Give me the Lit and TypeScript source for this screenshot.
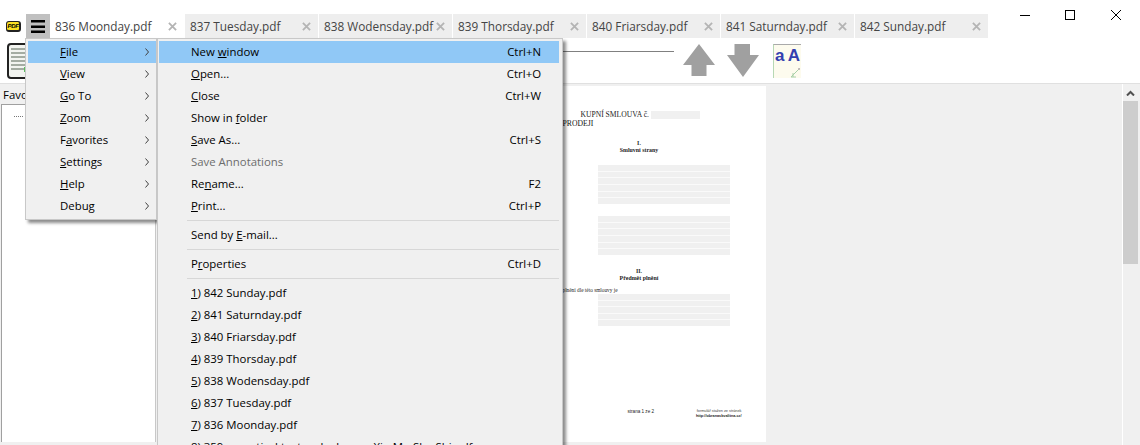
import { LitElement, html, css, nothing } from 'lit';
import { customElement } from 'lit/decorators.js';

type MenuRow = { label?: string; key?: string; disabled?: boolean; active?: boolean; sep?: boolean };

const TABS = [
  '836 Moonday.pdf',
  '837 Tuesday.pdf',
  '838 Wodensday.pdf',
  '839 Thorsday.pdf',
  '840 Friarsday.pdf',
  '841 Saturnday.pdf',
  '842 Sunday.pdf',
];

const MAIN_MENU = ['&File', '&View', '&Go To', '&Zoom', 'F&avorites', '&Settings', '&Help', 'Debug'];

const FILE_MENU: MenuRow[] = [
  { label: 'New &window', key: 'Ctrl+N', active: true },
  { label: '&Open...', key: 'Ctrl+O' },
  { label: '&Close', key: 'Ctrl+W' },
  { label: 'Show in &folder' },
  { label: '&Save As...', key: 'Ctrl+S' },
  { label: 'Save Annotations', disabled: true },
  { label: 'Re&name...', key: 'F2' },
  { label: '&Print...', key: 'Ctrl+P' },
  { sep: true },
  { label: 'Send by &E-mail...' },
  { sep: true },
  { label: 'P&roperties', key: 'Ctrl+D' },
  { sep: true },
  { label: '&1) 842 Sunday.pdf' },
  { label: '&2) 841 Saturnday.pdf' },
  { label: '&3) 840 Friarsday.pdf' },
  { label: '&4) 839 Thorsday.pdf' },
  { label: '&5) 838 Wodensday.pdf' },
  { label: '&6) 837 Tuesday.pdf' },
  { label: '&7) 836 Moonday.pdf' },
  { label: '&8) 359 - practical text a ok okrem - Xin Mu Sha Shi.pdf' },
];

// "&" marks the accelerator letter, as in a Windows menu resource
function accel(label: string) {
  const i = label.indexOf('&');
  if (i < 0) return label;
  return html`${label.slice(0, i)}<u>${label[i + 1]}</u>${label.slice(i + 2)}`;
}

@customElement('app-root')
export class AppRoot extends LitElement {
  static styles = css`
    :host {
      display: block;
      position: relative;
      width: 1140px;
      height: 445px;
      overflow: hidden;
      background: #fff;
      font-family: 'Open Sans', 'Noto Sans', sans-serif;
      font-size: 11.4px;
      color: #000;
    }

    /* title bar with tabs */
    .titlebar {
      display: flex;
      height: 38px;
      padding-right: 1px;
      box-sizing: border-box;
    }

    .tabs {
      display: flex;
      align-items: center;
      gap: 1px;
      height: 24px;
      margin-top: 14px;
      padding-left: 6px;
    }

    .logo {
      display: flex;
      align-items: center;
      justify-content: center;
      width: 15px;
      height: 11px;
      margin-right: 4px;
      background: #fbe122;
      border: 1px solid #222;
      border-width: 1px 2px 2px 1px;
      box-sizing: border-box;
      border-radius: 3px;
      font-family: 'Liberation Sans', sans-serif;
      font-size: 6px;
      font-weight: 700;
      font-style: italic;
      letter-spacing: -0.3px;
    }

    .burger {
      display: flex;
      align-items: center;
      justify-content: center;
      width: 24px;
      height: 24px;
      margin-right: -1px;
      background: #c0c0c0;
    }

    .tab {
      display: flex;
      align-items: center;
      justify-content: space-between;
      width: 133px;
      height: 24px;
      padding: 0 7px 0 5px;
      box-sizing: border-box;
      background: #eee;
      color: #444;
      font-size: 11.8px;
      white-space: nowrap;
    }

    .tab.active {
      width: 134px;
      background: #fff;
    }

    .controls {
      display: flex;
      margin-left: auto;
    }

    .win-btn {
      display: flex;
      align-items: center;
      justify-content: center;
      width: 46px;
      height: 30px;
      box-sizing: border-box;
    }

    .win-btn.first {
      padding-left: 2px;
    }

    /* toolbar */
    .toolbar {
      display: flex;
      align-items: flex-start;
      height: 46px;
      padding: 5px 0 0 7px;
      box-sizing: border-box;
      border-bottom: 1px solid #e0e0e0;
    }

    .thumb {
      position: relative;
      width: 45px;
      height: 36px;
      box-sizing: border-box;
      border: 2px solid #222;
      border-radius: 4px;
      background: #f2f4f0;
      padding: 3px 2px;
    }

    .thumb-line {
      height: 2px;
      margin-bottom: 2px;
      background: #a4aca2;
    }

    .thumb-dot {
      position: absolute;
      left: 15px;
      top: 22px;
      width: 2px;
      height: 5px;
      background: #5cc060;
    }

    .slider {
      width: 622px;
      height: 1px;
      margin-top: 8px;
      background: #808080;
    }

    .arrow {
      display: block;
      flex: none;
    }

    .arrow.up {
      margin-left: 9px;
    }

    .arrow.down {
      margin-left: 12px;
    }

    .font-btn {
      display: flex;
      justify-content: space-between;
      position: relative;
      width: 28px;
      height: 34px;
      margin: 1px 0 0 14px;
      padding: 1px 1px 0 1px;
      box-sizing: border-box;
      background: #fdfbee;
      border-top: 1px solid #aaa;
      border-left: 1px solid #b7d8b4;
      color: #3340b0;
      font-family: 'Liberation Sans', sans-serif;
      font-size: 17px;
      font-weight: 700;
      line-height: 19px;
    }

    .font-btn svg {
      position: absolute;
      right: 0;
      bottom: 0;
    }

    /* main area */
    .main {
      display: flex;
      height: 361px;
      background: #f0f0f0;
    }

    .sidebar {
      display: flex;
      flex-direction: column;
      flex: none;
      width: 156px;
      height: 358px;
    }

    .side-title {
      height: 20px;
      padding: 3px 0 0 3px;
      box-sizing: border-box;
      line-height: 16px;
      white-space: nowrap;
    }

    .tree {
      flex: 1;
      margin-left: 1px;
      padding: 11px 0 0 12px;
      background: #fff;
      border: 1px solid #a0a0a0;
      border-width: 1px 1px 0 1px;
      border-right-color: #c8c8c8;
    }

    .tree-dots {
      width: 9px;
      border-top: 1px dotted #777;
    }

    .viewer {
      display: flex;
      justify-content: center;
      flex: 1;
      padding-top: 2px;
    }

    .page {
      display: flex;
      flex-direction: column;
      width: 253px;
      height: 356px;
      padding-top: 25px;
      box-sizing: border-box;
      background: #fff;
      font-family: 'Liberation Serif', serif;
      color: #222;
      white-space: nowrap;
    }

    .doc-title {
      display: flex;
      gap: 2px;
      height: 8px;
      margin-left: 68px;
      font-size: 7.6px;
      line-height: 8px;
    }

    .blank {
      width: 49px;
      height: 8px;
      background: #f0f0f0;
    }

    .doc-line {
      height: 10px;
      margin: 0 0 -1px 50px;
      font-size: 7.7px;
      line-height: 10px;
      color: #111;
    }

    .head {
      height: 7px;
      font-size: 5.9px;
      font-weight: 700;
      line-height: 7px;
      text-align: center;
    }

    .head.gap1 {
      margin-top: 12px;
    }

    .head.gap2 {
      margin-top: 13px;
    }

    .stripes {
      display: flex;
      flex-direction: column;
      gap: 1px;
      width: 132px;
      margin-left: 85px;
      background: #fafafa;
    }

    .stripes i {
      display: block;
      flex: 1;
      background: #f0f0f0;
    }

    .stripes.one {
      height: 39px;
      margin-top: 11px;
    }

    .stripes.two {
      height: 39px;
      margin-top: 12px;
    }

    .stripes.three {
      height: 32px;
    }

    .doc-small {
      height: 8px;
      margin: 4px 0 0 50px;
      font-size: 5.3px;
      line-height: 8px;
    }

    .page-foot {
      display: flex;
      justify-content: space-between;
      margin: 83px 24px 0 115px;
      font-family: 'Liberation Sans', sans-serif;
      font-size: 3.8px;
      line-height: 5px;
      color: #444;
    }

    .page-foot .count {
      font-size: 4.6px;
      color: #222;
    }

    .page-foot .right {
      text-align: right;
    }

    .page-foot .right b {
      color: #222;
    }

    .scrollbar {
      flex: none;
      width: 15px;
      margin-right: 2px;
      border-left: 1px solid #fff;
    }

    .scroll-up {
      display: flex;
      align-items: center;
      justify-content: center;
      height: 17px;
    }

    .scroll-thumb {
      height: 163px;
      background: #cdcdcd;
    }

    /* popup menus */
    .menu {
      position: absolute;
      top: 38px;
      box-sizing: border-box;
      padding: 2px;
      background: #f0f0f0;
      border: 1px solid #c8c8c8;
      box-shadow: 3px 3px 3px rgba(0, 0, 0, 0.45);
      white-space: nowrap;
    }

    .menu.main-menu {
      left: 25px;
      width: 132px;
      height: 182px;
      padding-right: 0;
    }

    .menu.file-menu {
      left: 157px;
      width: 406px;
      height: 420px;
      padding: 2px 3px 2px 1px;
    }

    .row {
      display: flex;
      align-items: center;
      justify-content: space-between;
      height: 22px;
      line-height: 22px;
    }

    .main-menu .row {
      padding: 0 7px 0 32px;
    }

    .file-menu .row {
      padding: 0 18px 0 32px;
    }

    .row.active {
      background: #90c8f6;
    }

    .row.disabled {
      color: #6d6d6d;
    }

    .sep {
      height: 1px;
      margin: 3px 0 3px 28px;
      background: #d7d7d7;
    }
  `;

  private renderCross(size: number, color: string, width: number) {
    return html`<svg width=${size} height=${size} viewBox="0 0 10 10">
      <path d="M1 1 9 9M9 1 1 9" fill="none" stroke=${color} stroke-width=${width} />
    </svg>`;
  }

  private renderChevron() {
    return html`<svg width="4" height="8" viewBox="0 0 4 8">
      <path d="M.5 .5 3.5 4 .5 7.5" fill="none" stroke="#404040" />
    </svg>`;
  }

  private renderRow(row: MenuRow) {
    if (row.sep) return html`<div class="sep"></div>`;
    const cls = `row${row.active ? ' active' : ''}${row.disabled ? ' disabled' : ''}`;
    return html`<div class=${cls}>
      <span>${accel(row.label!)}</span>
      ${row.key ? html`<span>${row.key}</span>` : nothing}
    </div>`;
  }

  private renderStripes(cls: string, count: number) {
    return html`<div class="stripes ${cls}">${Array.from({ length: count }, () => html`<i></i>`)}</div>`;
  }

  render() {
    return html`
      <div class="titlebar">
        <div class="tabs">
          <div class="logo">PDF</div>
          <div class="burger">
            <svg width="14" height="13" viewBox="0 0 14 13">
              <path d="M0 0h14v2.5H0zM0 5.5h14V8H0zM0 10.5h14V13H0z" fill="#000" />
            </svg>
          </div>
          ${TABS.map(
            (name, i) => html`<div class="tab ${i === 0 ? 'active' : ''}">
              <span>${name}</span>
              ${this.renderCross(9, '#b4b4b4', 2)}
            </div>`,
          )}
        </div>
        <div class="controls">
          <div class="win-btn first">
            <svg width="10" height="10" viewBox="0 0 10 10"><path d="M0 5.5h10" stroke="#000" /></svg>
          </div>
          <div class="win-btn">
            <svg width="10" height="10" viewBox="0 0 10 10">
              <rect x=".5" y=".5" width="9" height="9" fill="none" stroke="#000" />
            </svg>
          </div>
          <div class="win-btn">
            <svg width="10" height="10" viewBox="0 0 10 10">
              <path d="M0 0 10 10M10 0 0 10" fill="none" stroke="#000" />
            </svg>
          </div>
        </div>
      </div>

      <div class="toolbar">
        <div class="thumb">
          <div class="thumb-line"></div>
          <div class="thumb-line"></div>
          <div class="thumb-line"></div>
          <div class="thumb-line"></div>
          <div class="thumb-line"></div>
          <div class="thumb-line"></div>
          <div class="thumb-dot"></div>
        </div>
        <div class="slider"></div>
        <svg class="arrow up" width="32" height="34" viewBox="0 0 32 34">
          <path d="M16 1 32 22H23.5V33H8.5V22H0Z" fill="#a0a0a0" />
        </svg>
        <svg class="arrow down" width="32" height="34" viewBox="0 0 32 34">
          <path d="M7.5 1H23V12H32L16 34 0 12H7.5Z" fill="#a0a0a0" />
        </svg>
        <div class="font-btn">
          <span>a</span><span>A</span>
          <svg width="11" height="11" viewBox="0 0 11 11">
            <path d="M10 1 1 10M3 10V6M1 10H6" fill="none" stroke="#a8d0a8" />
            <path d="M8 1 10 3" stroke="#d8a8c8" />
          </svg>
        </div>
      </div>

      <div class="main">
        <div class="sidebar">
          <div class="side-title">Favorites</div>
          <div class="tree"><div class="tree-dots"></div></div>
        </div>
        <div class="viewer">
          <div class="page">
            <div class="doc-title"><span>KUPNÍ SMLOUVA č.</span><div class="blank"></div></div>
            <div class="doc-line">PRODEJI</div>
            <div class="head gap1">I.</div>
            <div class="head">Smluvní strany</div>
            ${this.renderStripes('one', 6)} ${this.renderStripes('two', 6)}
            <div class="head gap2">II.</div>
            <div class="head">Předmět plnění</div>
            <div class="doc-small">plnění dle této smlouvy je</div>
            ${this.renderStripes('three', 5)}
            <div class="page-foot">
              <span class="count">strana 1 ze 2</span>
              <div class="right">formulář stažen ze stránek<br /><b>http://obranaskvalitna.cz/</b></div>
            </div>
          </div>
        </div>
        <div class="scrollbar">
          <div class="scroll-up">
            <svg width="9" height="6" viewBox="0 0 9 6">
              <path d="M1 5.5 4.5 2 8 5.5" fill="none" stroke="#505050" stroke-width="2" />
            </svg>
          </div>
          <div class="scroll-thumb"></div>
        </div>
      </div>

      <div class="menu main-menu">
        ${MAIN_MENU.map(
          (label, i) => html`<div class="row ${i === 0 ? 'active' : ''}">
            <span>${accel(label)}</span>
            ${this.renderChevron()}
          </div>`,
        )}
      </div>
      <div class="menu file-menu">${FILE_MENU.map((row) => this.renderRow(row))}</div>
    `;
  }
}

declare global {
  interface HTMLElementTagNameMap {
    'app-root': AppRoot;
  }
}
